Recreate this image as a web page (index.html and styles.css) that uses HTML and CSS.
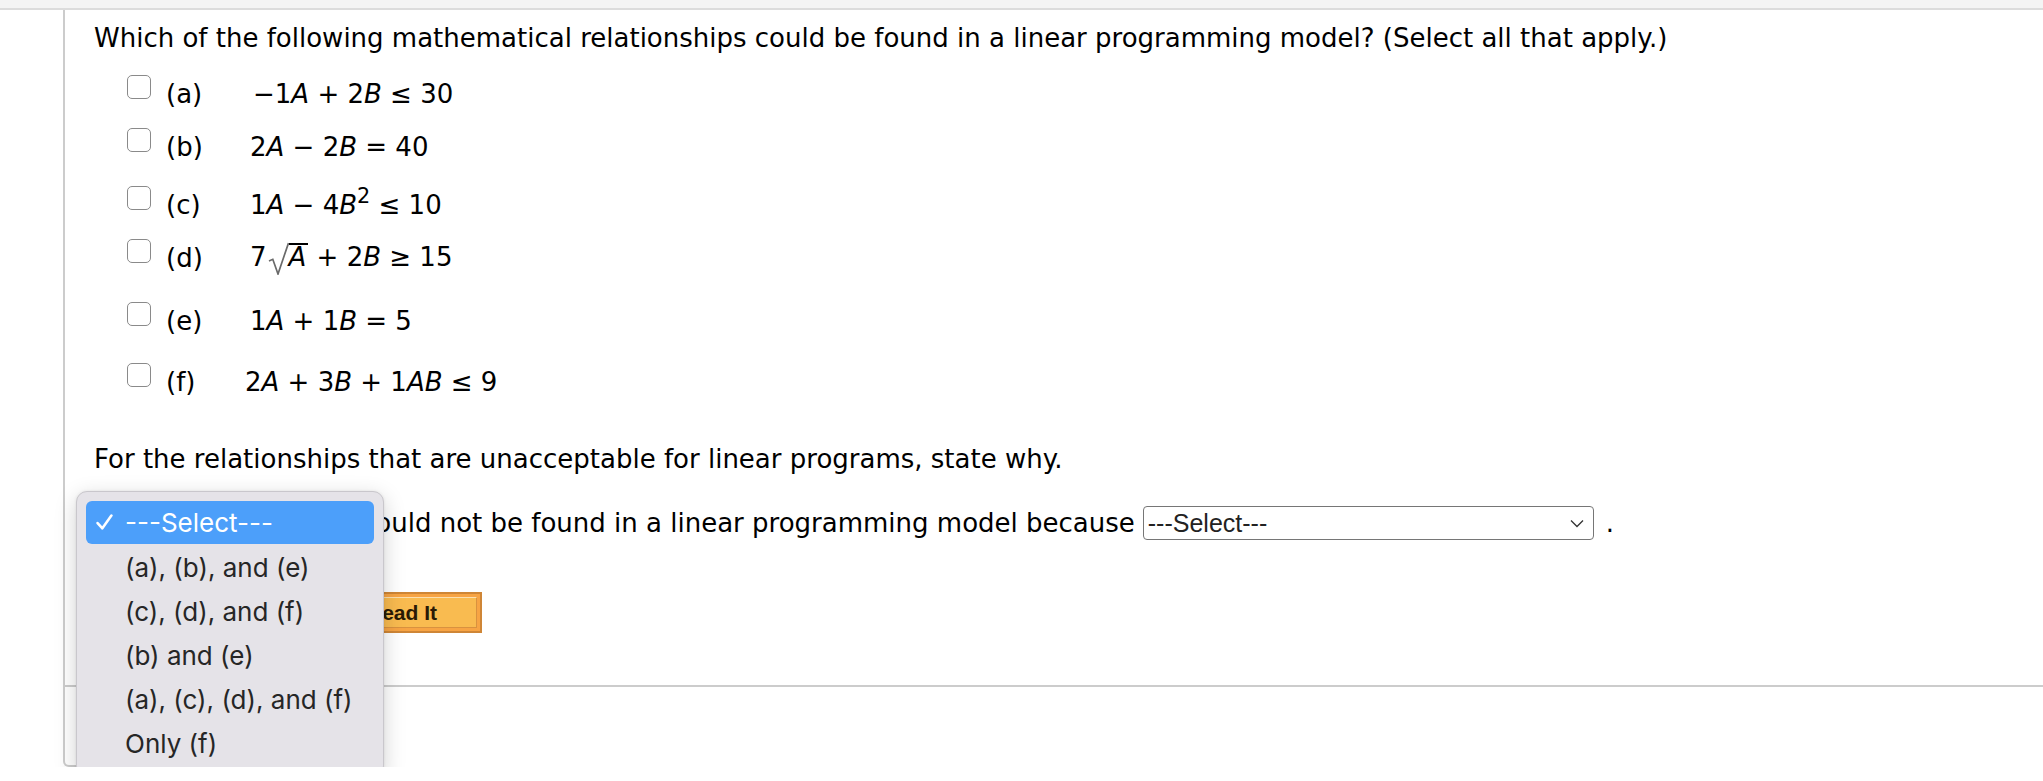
FILE: index.html
```html
<!DOCTYPE html>
<html lang="en">
<head>
<meta charset="utf-8">
<title>Linear programming question</title>
<link rel="stylesheet" href="styles.css">
</head>
<body>
<div class="topbar"></div>
<div class="question">
  <p class="prompt">Which of the following mathematical relationships could be found in a linear programming model? (Select all that apply.)</p>
  <ul class="choices">
    <li class="row"><span class="box"></span><span class="lbl">(a)</span><span class="expr">−1<i>A</i> + 2<i>B</i> ≤ 30</span></li>
    <li class="row"><span class="box"></span><span class="lbl">(b)</span><span class="expr shift-l">2<i>A</i> − 2<i>B</i> = 40</span></li>
    <li class="row gap-md"><span class="box"></span><span class="lbl">(c)</span><span class="expr shift-l">1<i>A</i> − 4<i>B</i><sup>2</sup> ≤ 10</span></li>
    <li class="row"><span class="box"></span><span class="lbl">(d)</span><span class="expr shift-l">7<svg class="rad" width="21" height="33" viewBox="0 0 21 33"><path d="M1 19 L4.8 17.3 L10 32 L20.5 1" fill="none" stroke="#6a6a6a" stroke-width="1.7"/></svg><span class="radicand"><i>A</i></span> + 2<i>B</i> ≥ 15</span></li>
    <li class="row gap-lg"><span class="box"></span><span class="lbl">(e)</span><span class="expr shift-l">1<i>A</i> + 1<i>B</i> = 5</span></li>
    <li class="row gap-lg2"><span class="box"></span><span class="lbl">(f)</span><span class="expr shift-xl">2<i>A</i> + 3<i>B</i> + 1<i>AB</i> ≤ 9</span></li>
  </ul>
  <p class="prompt2">For the relationships that are unacceptable for linear programs, state why.</p>
  <div class="sentence">
    <span class="sel sel-first"><span class="sel-text">---Select---</span><svg class="chev" width="14" height="9" viewBox="0 0 14 9"><path d="M1 1.5 L7 7.5 L13 1.5" fill="none" stroke="#333" stroke-width="1.3"/></svg></span>
    <span class="txt">could not be found in a linear programming model because</span>
    <span class="sel sel-second"><span class="sel-text">---Select---</span><svg class="chev" width="14" height="9" viewBox="0 0 14 9"><path d="M1 1.5 L7 7.5 L13 1.5" fill="none" stroke="#333" stroke-width="1.3"/></svg></span>
    <span class="txt dot">.</span>
    <div class="menu">
      <div class="opt opt-active"><svg class="check" width="17" height="17" viewBox="0 0 16 16"><path d="M1.5 8.5 L6 13.5 L14.5 1.5" fill="none" stroke="#fff" stroke-width="2.4" stroke-linecap="round" stroke-linejoin="round"/></svg>---Select---</div>
      <div class="opt">(a), (b), and (e)</div>
      <div class="opt">(c), (d), and (f)</div>
      <div class="opt">(b) and (e)</div>
      <div class="opt">(a), (c), (d), and (f)</div>
      <div class="opt">Only (f)</div>
    </div>
  </div>
  <div class="help"><span class="need">Need Help?</span><span class="readit"><span class="readit-inner">Read It</span></span></div>
  <div class="sep"></div>
</div>
<div class="corner"></div>
</body>
</html>
```
FILE: styles.css
```css
html, body {
  margin: 0;
  padding: 0;
  background: #fff;
}
body {
  font-family: "DejaVu Sans", Verdana, sans-serif;
  font-size: 26px;
  color: #000;
  overflow: hidden;
}
.topbar {
  height: 8px;
  background: #f4f4f4;
  border-bottom: 2px solid #dcdcdc;
}
.question {
  margin-left: 63px;
  border-left: 2px solid #cccccc;
  padding: 13px 0 0 29px;
  position: relative;
}
.prompt, .prompt2 {
  margin: 0;
  line-height: 30px;
  white-space: nowrap;
}
.choices {
  list-style: none;
  margin: 21px 0 0 0;
  padding: 0 0 0 33px;
}
.row {
  display: flex;
  align-items: center;
  height: 40px;
  margin-top: 13px;
}
.row:first-child { margin-top: 0; }
.row.gap-md { margin-top: 18px; }
.row.gap-lg { margin-top: 23px; }
.row.gap-lg2 { margin-top: 21px; }
.box {
  width: 24px;
  height: 24px;
  border: 1.5px solid #8a8a8a;
  border-radius: 5px;
  box-sizing: border-box;
  align-self: flex-start;
  margin-top: 1px;
  flex: none;
}
.lbl {
  margin-left: 15px;
  width: 87px;
  flex: none;
}
.expr {
  display: inline-block;
  white-space: pre;
  line-height: 30px;
}
.expr.shift-l { margin-left: -3px; }
.expr.shift-xl { margin-left: -8px; }
.expr i { font-style: italic; }
.expr sup {
  font-size: 0.8em;
  line-height: 0;
  position: relative;
  top: -0.55em;
  vertical-align: baseline;
}
.rad {
  display: inline-block;
  vertical-align: -9px;
  margin-left: 1px;
}
.radicand {
  display: inline-block;
  border-top: 2px solid #000;
  padding: 0 2px 0 0;
  line-height: 24px;
}
.prompt2 { margin-top: 42px; }
.sentence {
  margin-top: 32px;
  position: relative;
  display: flex;
  align-items: center;
  height: 34px;
  white-space: nowrap;
}
.txt { margin-left: 8px; }
.txt.dot { margin-left: 12px; }
.sel {
  display: inline-flex;
  align-items: center;
  justify-content: space-between;
  height: 34px;
  box-sizing: border-box;
  border: 1.5px solid #767676;
  border-radius: 4px;
  padding: 0 9px 0 4px;
  font-family: "Liberation Sans", Arial, sans-serif;
  font-size: 25px;
  color: #222;
  background: #fff;
}
.sel-first { width: 259px; }
.sel-second { width: 451px; margin-left: 8px; }
.chev { flex: none; }
.menu {
  position: absolute;
  left: -18px;
  top: -15px;
  width: 308px;
  box-sizing: border-box;
  padding: 9px 9px 11px 9px;
  background: #e5e3e8;
  border: 1px solid #c9c7cc;
  border-radius: 11px;
  box-shadow: 0 6px 22px rgba(0, 0, 0, 0.18), 0 0 3px rgba(0, 0, 0, 0.08);
  font-family: Inter, "Noto Sans", sans-serif;
  font-size: 26px;
  color: #262626;
  z-index: 5;
}
.opt {
  height: 44px;
  display: flex;
  align-items: center;
  padding-left: 39px;
  border-radius: 6px;
  position: relative;
}
.opt-active {
  height: 43px;
  margin-bottom: 1px;
  background: #4c9ffa;
  color: #fff;
}
.check {
  position: absolute;
  left: 10px;
  top: 13px;
}
.help {
  margin-top: 52px;
  display: flex;
  align-items: center;
  height: 41px;
}
.need {
  width: 228px;
}
.readit {
  display: inline-flex;
  height: 41px;
  width: 160px;
  box-sizing: border-box;
  border: 2px solid #cf8636;
  background: #f7a444;
  padding: 3px;
}
.readit-inner {
  flex: 1;
  display: flex;
  align-items: center;
  justify-content: center;
  border: 1.5px solid #d9923f;
  border-top-color: #fbe0b0;
  border-left-color: #f7c98a;
  background: #f9bb50;
  font-family: "Liberation Sans", Arial, sans-serif;
  font-weight: bold;
  font-size: 21px;
  color: #2a1a05;
}
.sep {
  margin-top: 52px;
  margin-left: -29px;
  height: 2px;
  background: #cccccc;
}
.corner {
  margin-left: 63px;
  width: 40px;
  height: 78px;
  border-left: 2px solid #cccccc;
  border-bottom: 2px solid #cccccc;
  border-bottom-left-radius: 6px;
}
```
